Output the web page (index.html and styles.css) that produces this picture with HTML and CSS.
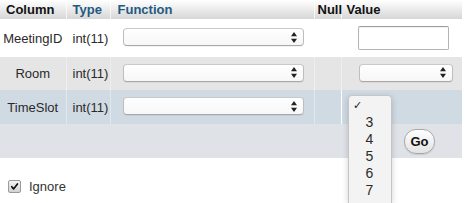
FILE: index.html
```html
<!DOCTYPE html>
<html>
<head>
<meta charset="utf-8">
<link rel="stylesheet" href="styles.css">
</head>
<body>
<table class="grid">
  <colgroup>
    <col class="c-col"><col class="c-type"><col class="c-func"><col class="c-null"><col class="c-val">
  </colgroup>
  <thead>
    <tr>
      <th>Column</th>
      <th class="link">Type</th>
      <th class="link th-func">Function</th>
      <th class="th-null">Null</th>
      <th>Value</th>
    </tr>
  </thead>
  <tbody>
    <tr class="r1">
      <td class="name">MeetingID</td>
      <td class="type">int(11)</td>
      <td class="func"><div class="sel"><svg class="arr" viewBox="0 0 6 11" width="6" height="11"><polygon points="0,4.2 3,0 6,4.2"/><polygon points="0,6.8 6,6.8 3,11"/></svg></div></td>
      <td></td>
      <td class="val"><div class="inp"></div></td>
    </tr>
    <tr class="r2">
      <td class="name">Room</td>
      <td class="type">int(11)</td>
      <td class="func"><div class="sel"><svg class="arr" viewBox="0 0 6 11" width="6" height="11"><polygon points="0,4.2 3,0 6,4.2"/><polygon points="0,6.8 6,6.8 3,11"/></svg></div></td>
      <td></td>
      <td class="val"><div class="sel sel-val"><svg class="arr" viewBox="0 0 6 11" width="6" height="11"><polygon points="0,4.2 3,0 6,4.2"/><polygon points="0,6.8 6,6.8 3,11"/></svg></div></td>
    </tr>
    <tr class="r3">
      <td class="name">TimeSlot</td>
      <td class="type">int(11)</td>
      <td class="func"><div class="sel"><svg class="arr" viewBox="0 0 6 11" width="6" height="11"><polygon points="0,4.2 3,0 6,4.2"/><polygon points="0,6.8 6,6.8 3,11"/></svg></div></td>
      <td></td>
      <td class="val popcell">
        <div class="popup">
          <div class="opt"><span class="check">✓</span></div>
          <div class="opt">3</div>
          <div class="opt">4</div>
          <div class="opt">5</div>
          <div class="opt">6</div>
          <div class="opt">7</div>
        </div>
      </td>
    </tr>
  </tbody>
  <tfoot>
    <tr class="r4">
      <td colspan="5" class="foot"><span class="go">Go</span></td>
    </tr>
  </tfoot>
</table>
<div class="ignore">
  <span class="cb"><svg viewBox="0 0 12 12" width="12" height="12"><path d="M3 6.2 L5 8.6 L9.2 3.2" fill="none" stroke="#111" stroke-width="1.8" stroke-linecap="round" stroke-linejoin="round"/></svg></span>
  <span class="ig-label">Ignore</span>
</div>
</body>
</html>
```

FILE: styles.css
```css
html, body {
  margin: 0;
  padding: 0;
  overflow: hidden;
  background: #fff;
}
body {
  font-family: "Liberation Sans", Arial, sans-serif;
  font-size: 13px;
  color: #2a2a2a;
  width: 474px;
  height: 203px;
}
.grid {
  border-collapse: collapse;
  table-layout: fixed;
  width: 462px;
}
.c-col { width: 66px; }
.c-type { width: 44px; }
.c-func { width: 204px; }
.c-null { width: 27px; }
.c-val { width: 121px; }

th {
  height: 19px;
  padding: 0 0 0 6px;
  text-align: left;
  font-weight: bold;
  color: #111;
  background: linear-gradient(#ffffff, #d6d6d6);
  border-right: 1px solid rgba(255,255,255,0.7);
  white-space: nowrap;
  line-height: 19px;
}
th.link { color: #235a81; }
th.th-func { padding-left: 7px; }
th.th-null { padding-left: 3px; }
th:last-child { padding-left: 5px; border-right: none; }

td {
  padding: 0;
  border-right: 1px solid rgba(255,255,255,0.35);
  vertical-align: middle;
  white-space: nowrap;
}
td:last-child { border-right: none; }

.r1 td { height: 38px; background: #fff; }
.r2 td { height: 33px; background: #e5e5e5; }
.r3 td { height: 34px; background: #d0dae3; }
.r4 td { height: 34px; background: #dfe3e8; }

.name { text-align: center; }
.type { padding-left: 6px; }
.func { padding-left: 12px; }
.val { padding-left: 16px; }

.sel {
  width: 179px;
  height: 16px;
  margin-top: -2px;
  border: 1px solid #bdbdbd;
  border-top-color: #c9c9c9;
  border-bottom-color: #a9a9a9;
  border-radius: 4px;
  background: linear-gradient(#ffffff, #f7f7f7);
  box-shadow: 0 1px 0 rgba(0,0,0,0.05);
  display: flex;
  align-items: center;
  justify-content: flex-end;
}
.sel .arr {
  fill: #222;
  margin-right: 6px;
}
.sel-val {
  width: 92px;
  margin-left: 1px;
}

.inp {
  width: 89px;
  height: 22px;
  border: 1px solid #b3b3b3;
  border-top-color: #9d9d9d;
  border-radius: 2px;
  background: #fff;
  box-shadow: inset 0 1px 1px rgba(0,0,0,0.06);
}

.popcell { position: relative; }
.popup {
  position: absolute;
  left: 6px;
  top: 5px;
  width: 42px;
  height: 106px;
  background: #f3f3f3;
  border: 1px solid #c6c6c6;
  border-bottom: none;
  border-radius: 4px 4px 0 0;
  box-shadow: 0 2px 6px rgba(0,0,0,0.18);
  padding-top: 1px;
  z-index: 5;
}
.opt {
  height: 17px;
  line-height: 17px;
  font-size: 14px;
  color: #2b2b2b;
  padding-left: 17px;
  position: relative;
}
.check {
  position: absolute;
  left: 4px;
  top: 0;
  font-size: 11px;
  color: #222;
}

.foot {
  text-align: right;
  padding-right: 27px;
}
.go {
  display: inline-block;
  width: 29px;
  height: 23px;
  line-height: 23px;
  text-align: center;
  font-weight: bold;
  font-size: 13px;
  color: #111;
  border: 1px solid #a8a8a8;
  border-radius: 12px;
  background: linear-gradient(#ffffff, #e2e2e2);
  box-shadow: 0 1px 1px rgba(0,0,0,0.1);
  vertical-align: middle;
}

.ignore {
  display: flex;
  align-items: center;
  gap: 8px;
  padding-left: 8px;
  margin-top: 21px;
}
.cb {
  width: 11px;
  height: 11px;
  border: 1px solid #9a9a9a;
  border-radius: 2px;
  background: linear-gradient(#f4f4f4, #d2d2d2);
  display: flex;
  align-items: center;
  justify-content: center;
}
.cb svg { width: 11px; height: 11px; }
.ig-label { font-size: 13px; color: #333; }
```
